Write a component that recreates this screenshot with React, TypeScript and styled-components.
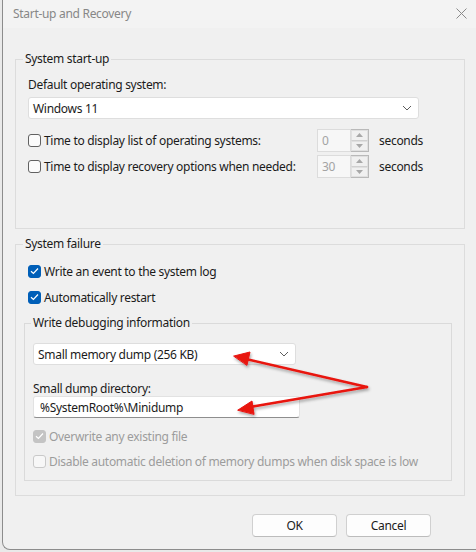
import React from "react";
import styled, { createGlobalStyle } from "styled-components";

const GlobalStyle = createGlobalStyle`
  html, body {
    margin: 0;
    padding: 0;
    background: #e9e9e9;
    overflow: hidden;
  }
  body {
    font-family: "Segoe UI", "Noto Sans", "Open Sans", sans-serif;
    font-size: 12px;
    letter-spacing: -0.3px;
    color: #1b1b1b;
  }
`;

const Window = styled.div`
  position: relative;
  margin-left: 2px;
  width: 490px;
  height: 550px;
  background: #f0f0f0;
  border-left: 1px solid #8c8c8c;
  border-bottom: 1px solid #8c8c8c;
  border-bottom-left-radius: 8px;
  box-sizing: border-box;
`;

const TitleBar = styled.div`
  height: 28px;
  display: flex;
  align-items: center;
  justify-content: space-between;
  padding: 0 0 2px 10px;
  box-sizing: border-box;
  background: #f3f3f3;
`;

const Title = styled.span`
  color: #878787;
  font-size: 12px;
`;

const CloseBtn = styled.div`
  width: 46px;
  height: 28px;
  display: flex;
  align-items: center;
  justify-content: flex-start;
  padding-left: 14px;
  box-sizing: border-box;
  margin-right: 4px;
`;

const Body = styled.div`
  padding: 23px 0 0 12px;
  width: 450px;
`;

const Group = styled.fieldset<{ $h?: number; $inner?: boolean }>`
  margin: 0;
  border: 1px solid ${({ $inner }) => ($inner ? "#dadada" : "#dcdcdc")};
  padding: ${({ $inner }) => ($inner ? "12px 8px 10px 8px" : "10px 12px 14px 12px")};
  min-width: 0;
  box-sizing: border-box;
  ${({ $h }) => ($h ? `height: ${$h}px;` : "")}
  display: flex;
  flex-direction: column;
`;

const Legend = styled.legend<{ $inner?: boolean }>`
  padding: 0 2px;
  margin-left: ${({ $inner }) => ($inner ? "-2px" : "-5px")};
  line-height: 16px;
  color: #1b1b1b;
`;

const Label = styled.div<{ $lh?: number }>`
  line-height: ${({ $lh }) => $lh || 16}px;
`;

const Select = styled.div<{ $w: number }>`
  width: ${({ $w }) => $w}px;
  height: 22px;
  background: #ffffff;
  border: 1px solid #dedede;
  border-radius: 3px;
  box-sizing: border-box;
  display: flex;
  align-items: center;
  justify-content: space-between;
  padding: 0 6px 0 4px;
  margin-top: 4px;
`;

const TextBox = styled.div<{ $w: number }>`
  width: ${({ $w }) => $w}px;
  height: 22px;
  background: #ffffff;
  border: 1px solid #e2e2e2;
  border-bottom: 1px solid #8e8e8e;
  border-radius: 3px;
  box-sizing: border-box;
  display: flex;
  align-items: center;
  padding: 0 6px;
`;

const SpinRow = styled.div<{ $mt: number }>`
  display: flex;
  align-items: center;
  height: 23px;
  margin-top: ${({ $mt }) => $mt}px;
`;

const CheckRow = styled.label<{ $mt: number; $w?: number }>`
  display: flex;
  align-items: center;
  gap: 3px;
  height: 18px;
  margin-top: ${({ $mt }) => $mt}px;
  ${({ $w }) => ($w ? `width: ${$w}px; flex: 0 0 ${$w}px;` : "")}
`;

const Box = styled.span<{ $checked?: boolean; $disabled?: boolean }>`
  width: 13px;
  height: 13px;
  box-sizing: border-box;
  border-radius: 3px;
  flex: 0 0 13px;
  display: flex;
  align-items: center;
  justify-content: center;
  background: ${({ $checked, $disabled }) =>
    $checked ? ($disabled ? "#c4c4c4" : "#005fb8") : $disabled ? "#f7f7f7" : "#fbfbfb"};
  border: 1px solid
    ${({ $checked, $disabled }) =>
      $checked ? ($disabled ? "#c4c4c4" : "#005fb8") : $disabled ? "#c9c9c9" : "#616161"};
`;

const CheckText = styled.span<{ $disabled?: boolean }>`
  color: ${({ $disabled }) => ($disabled ? "#9c9c9c" : "#1b1b1b")};
  white-space: nowrap;
`;

const Spinner = styled.div`
  display: flex;
  height: 23px;
`;

const SpinInput = styled.div`
  width: 34px;
  height: 23px;
  box-sizing: border-box;
  border: 1px solid #dcdcdc;
  background: #f7f7f7;
  color: #a3a3a3;
  padding: 0 4px;
  display: flex;
  align-items: center;
`;

const SpinArrows = styled.div`
  width: 18px;
  height: 23px;
  box-sizing: border-box;
  border: 1px solid #b9b9b9;
  border-left: none;
  display: flex;
  flex-direction: column;
`;

const SpinArrow = styled.div<{ $up?: boolean }>`
  flex: 1;
  display: flex;
  align-items: center;
  justify-content: center;
  background: #f0f0f0;
  border: 1px solid #e0e0e0;
  ${({ $up }) => ($up ? "border-bottom: 1px solid #d0d0d0;" : "")}
`;

const Seconds = styled.span`
  margin-left: 10px;
`;

const Inner = styled.div`
  margin: 9px 0 0 -4px;
`;

const Buttons = styled.div`
  display: flex;
  gap: 9px;
  margin: 18px 0 0 237px;
`;

const Button = styled.button`
  width: 85px;
  height: 23px;
  background: #fdfdfd;
  border: 1px solid #d0d0d0;
  border-bottom-color: #bcbcbc;
  border-radius: 4px;
  font-family: inherit;
  font-size: 12px;
  letter-spacing: inherit;
  color: #1b1b1b;
  padding: 0;
`;

const Annotation = styled.svg`
  position: absolute;
  left: -3px;
  top: 0;
  pointer-events: none;
`;

const Chevron = () => (
  <svg width="10" height="6" viewBox="0 0 10 6">
    <path d="M1 1 L5 5 L9 1" fill="none" stroke="#5d5d5d" strokeWidth="1" />
  </svg>
);

const Tick = ({ color = "#ffffff" }: { color?: string }) => (
  <svg width="9" height="8" viewBox="0 0 9 8">
    <path d="M1 4.2 L3.4 6.5 L8 1.5" fill="none" stroke={color} strokeWidth="1.2" />
  </svg>
);

const Check = ({
  checked,
  disabled,
  text,
  mt,
  w,
}: {
  checked?: boolean;
  disabled?: boolean;
  text: string;
  mt: number;
  w?: number;
}) => (
  <CheckRow $mt={mt} $w={w}>
    <Box $checked={checked} $disabled={disabled}>
      {checked && <Tick />}
    </Box>
    <CheckText $disabled={disabled}>{text}</CheckText>
  </CheckRow>
);

const Spin = ({ value }: { value: string }) => (
  <Spinner>
    <SpinInput>{value}</SpinInput>
    <SpinArrows>
      <SpinArrow $up>
        <svg width="7" height="4" viewBox="0 0 7 4">
          <path d="M0 4 L3.5 0 L7 4 Z" fill="#a8a8a8" />
        </svg>
      </SpinArrow>
      <SpinArrow>
        <svg width="7" height="4" viewBox="0 0 7 4">
          <path d="M0 0 L3.5 4 L7 0 Z" fill="#a8a8a8" />
        </svg>
      </SpinArrow>
    </SpinArrows>
  </Spinner>
);

const App = () => {
  return (
    <>
      <GlobalStyle />
      <Window>
        <TitleBar>
          <Title>Start-up and Recovery</Title>
          <CloseBtn>
            <svg width="11" height="11" viewBox="0 0 11 11">
              <path d="M0.5 0.5 L10.5 10.5 M10.5 0.5 L0.5 10.5" stroke="#8a8a8a" strokeWidth="1" />
            </svg>
          </CloseBtn>
        </TitleBar>

        <Body>
          {/* System start-up */}
          <Group $h={178}>
            <Legend>System start-up</Legend>
            <Label>Default operating system:</Label>
            <Select $w={391}>
              <span>Windows 11</span>
              <Chevron />
            </Select>
            <SpinRow $mt={10}>
              <Check text="Time to display list of operating systems:" mt={0} w={289} />
              <Spin value="0" />
              <Seconds>seconds</Seconds>
            </SpinRow>
            <SpinRow $mt={3}>
              <Check text="Time to display recovery options when needed:" mt={0} w={289} />
              <Spin value="30" />
              <Seconds>seconds</Seconds>
            </SpinRow>
          </Group>

          {/* System failure */}
          <Group style={{ marginTop: 7 }}>
            <Legend>System failure</Legend>
            <Check checked text="Write an event to the system log" mt={0} />
            <Check checked text="Automatically restart" mt={8} />
            <Inner>
              <Group $inner>
                <Legend $inner>Write debugging information</Legend>
                <Select $w={263} style={{ marginTop: 0 }}>
                  <span>Small memory dump (256 KB)</span>
                  <Chevron />
                </Select>
                <Label $lh={14} style={{ marginTop: 17 }}>
                  Small dump directory:
                </Label>
                <TextBox $w={267}>%SystemRoot%\Minidump</TextBox>
                <Check checked disabled text="Overwrite any existing file" mt={9} />
                <Check
                  disabled
                  text="Disable automatic deletion of memory dumps when disk space is low"
                  mt={7}
                />
              </Group>
            </Inner>
          </Group>

          <Buttons>
            <Button>OK</Button>
            <Button>Cancel</Button>
          </Buttons>
        </Body>

        <Annotation width="476" height="552" viewBox="0 0 476 552">
          <defs>
            <filter id="sh" x="-10%" y="-10%" width="120%" height="130%">
              <feDropShadow dx="1" dy="2" stdDeviation="1.5" floodColor="#000" floodOpacity="0.35" />
            </filter>
          </defs>
          <g filter="url(#sh)" fill="#e8130f" stroke="#e8130f" strokeLinecap="round" strokeLinejoin="round">
            <path d="M367 387 L246 359" fill="none" strokeWidth="2.5" />
            <path d="M367 387 L250 407" fill="none" strokeWidth="2.5" />
            <path d="M234 356 L250 352 L247 365 Z" strokeWidth="1" />
            <path d="M238 410 L252 401 L254 414 Z" strokeWidth="1" />
          </g>
        </Annotation>
      </Window>
    </>
  );
};

export default App;
